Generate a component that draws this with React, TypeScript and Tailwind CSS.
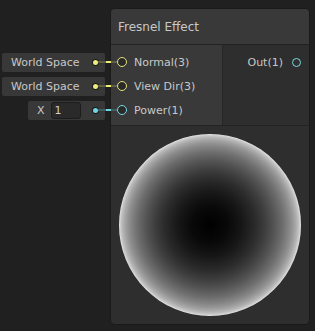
import React from "react";

const stops = [0, 0.2, 0.35, 0.5, 0.6, 0.7, 0.8, 0.86, 0.9, 0.94, 0.97, 0.99, 1].map((r) => {
  const v = 1 - Math.sqrt(Math.max(0, 1 - r * r));
  const c = Math.round(Math.min(1, Math.pow(v, 0.85) * 0.94) * 255);
  return { r, c };
});

const Preview = () => (
  <svg width="182" height="182" viewBox="0 0 182 182">
    <defs>
      <radialGradient id="fres" cx="50%" cy="50%" r="50%">
        {stops.map((s) => (
          <stop key={s.r} offset={`${s.r * 100}%`} stopColor={`rgb(${s.c},${s.c},${s.c})`} />
        ))}
      </radialGradient>
    </defs>
    <circle cx="91" cy="91" r="91" fill="url(#fres)" />
  </svg>
);

const InputBox = ({ label, color }: { label: string; color: string }) => (
  <div className="h-[24px] flex items-center justify-end pr-[5px]">
    <div className="h-[19px] w-[103px] bg-[#383838] rounded-[2px] flex items-center pl-[9px] pr-[7px] justify-between">
      <span className="text-[11px] text-[#c8c8c8] leading-none">{label}</span>
      <span className={`w-[5px] h-[5px] rounded-full ${color} ring-1 ring-[#1a1a1a]`} />
    </div>
  </div>
);

const PortRow = ({ label, dash, line, ring }: { label: string; dash: string; line: string; ring: string }) => (
  <div className="relative h-[24px] flex items-center pl-[23px]">
    <div className={`absolute left-[-13px] top-[11px] w-[20px] h-[2px] ${line}`} />
    <div className={`absolute left-[-5px] top-[11px] w-[5px] h-[2px] ${dash}`} />
    <div className={`absolute left-[6px] top-[7px] w-[10px] h-[10px] rounded-full border-[1.5px] ${ring} bg-[#2a2a2a]`} />
    <span className="text-[11px] text-[#c8c8c8] leading-none">{label}</span>
  </div>
);

export default function App() {
  return (
    <div className="w-[315px] h-[331px] bg-[#202020] flex pt-[8px] font-['DejaVu_Sans',sans-serif]">
      <div className="w-[110px] pt-[42px] flex flex-col">
        <InputBox label="World Space" color="bg-[#eded78]" />
        <InputBox label="World Space" color="bg-[#eded78]" />
        <div className="h-[24px] flex items-center justify-end pr-[5px]">
          <div className="h-[19px] w-[77px] bg-[#383838] rounded-[2px] flex items-center pl-[9px] pr-[7px]">
            <span className="text-[11px] text-[#c8c8c8] leading-none">X</span>
            <div className="ml-[6px] w-[30px] h-[17px] bg-[#2a2a2a] border border-[#1c1c1c] rounded-[3px] flex items-center pl-[3px]">
              <span className="text-[11px] text-[#d0d0d0] leading-none">1</span>
            </div>
            <span className="ml-auto w-[5px] h-[5px] rounded-full bg-[#6fd6e2] ring-1 ring-[#1a1a1a]" />
          </div>
        </div>
      </div>
      <div className="w-[200px] h-[317px] rounded-[5px] border border-[#1a1a1a] bg-[#2e2e2e] flex flex-col">
        <div className="h-[36px] bg-[#393939] rounded-t-[4px] border-b border-[#232323] flex items-center pl-[7px]">
          <span className="text-[12px] text-[#c8c8c8]">Fresnel Effect</span>
        </div>
        <div className="h-[81px] flex border-b border-[#232323]">
          <div className="w-[112px] bg-[#393939] border-r border-[#262626] pt-[5px] flex flex-col">
            <PortRow label="Normal(3)" dash="bg-[#eded78]" line="bg-[#5e5e44]" ring="border-[#e4e47a]" />
            <PortRow label="View Dir(3)" dash="bg-[#eded78]" line="bg-[#5e5e44]" ring="border-[#e4e47a]" />
            <PortRow label="Power(1)" dash="bg-[#6fd6e2]" line="bg-[#3e5e62]" ring="border-[#7ad8e2]" />
          </div>
          <div className="flex-1 pt-[5px]">
            <div className="h-[24px] flex items-center justify-end pr-[8px]">
              <span className="text-[11px] text-[#c8c8c8] leading-none">Out(1)</span>
              <span className="ml-[9px] w-[9px] h-[9px] rounded-full border-[1.5px] border-[#7ad8e2]" />
            </div>
          </div>
        </div>
        <div className="flex-1 flex items-center justify-center rounded-b-[4px]">
          <Preview />
        </div>
      </div>
    </div>
  );
}
